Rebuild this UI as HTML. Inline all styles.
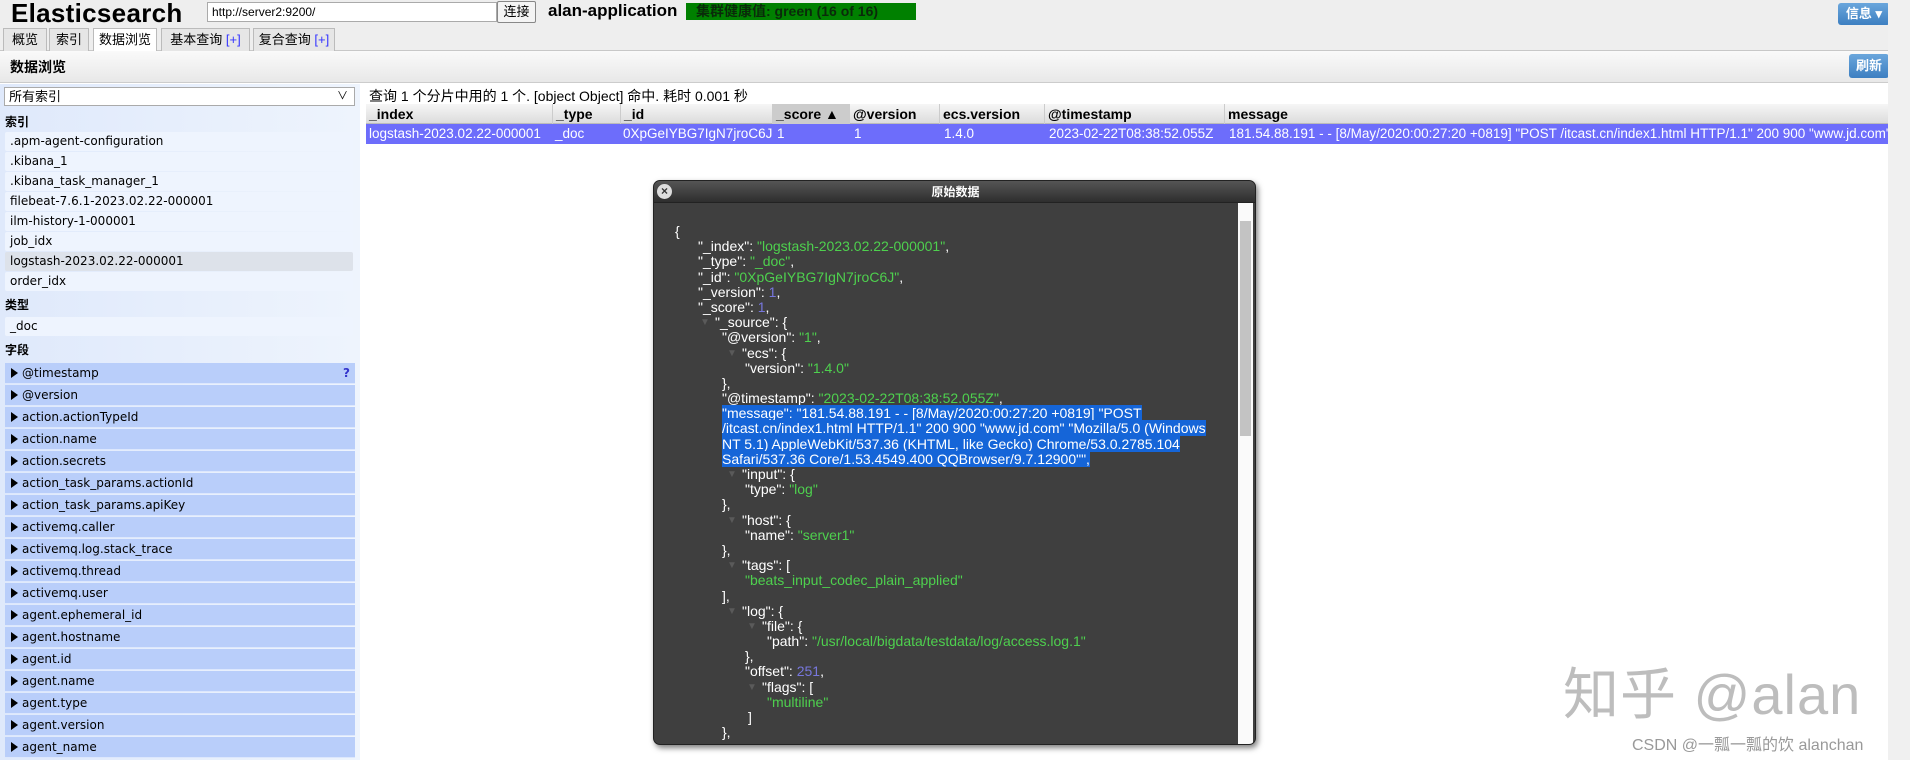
<!DOCTYPE html>
<html><head><meta charset="utf-8">
<style>
*{box-sizing:border-box;margin:0;padding:0}
body{width:1910px;height:760px;overflow:hidden;background:#fff;font-family:"Liberation Sans","Noto Sans CJK SC",sans-serif;font-size:13px;color:#000;position:relative}
.abs{position:absolute}
#top{left:0;top:0;width:1910px;height:51px;background:#eee;border-bottom:1px solid #c8c8c8}
.title{left:11px;top:-2px;font-size:26px;font-weight:bold;letter-spacing:0.3px}
.inp{left:207px;top:2px;width:290px;height:20px;border:1px solid #aaa;background:#fff;font-size:12px;padding:2px 4px}
.btn{left:497px;top:1px;width:39px;height:22px;border:1px solid #888;background:#f4f4f4;border-radius:2px;font-size:13px;text-align:center;line-height:20px}
.cname{left:548px;top:1px;font-size:17px;font-weight:bold}
.health{left:686px;top:3px;width:230px;height:17px;background:#008000;color:#0a2a0a;font-size:14px;font-weight:bold;padding-left:10px;line-height:17px}
.info{left:1838px;top:3px;width:52px;height:22px;background:linear-gradient(#6aa6dc,#3d7fc1);border-radius:3px;color:#fff;font-size:13px;font-weight:bold;text-align:center;line-height:22px}
.tab{top:28px;height:23px;border:1px solid #bbb;border-bottom:none;background:#e6e6e6;font-size:13px;text-align:center;line-height:22px}
.tab b{font-weight:normal;color:#33f}
#hdr{left:0;top:51px;width:1910px;height:32px;background:linear-gradient(#fafafa,#e8e8e8);border-bottom:1px solid #ccc}
.hdrt{left:10px;top:57px;font-size:14px;font-weight:bold}
.refresh{left:1849px;top:54px;width:40px;height:24px;background:linear-gradient(#6aa6dc,#3d7fc1);border-radius:3px;color:#fff;font-size:13px;font-weight:bold;text-align:center;line-height:24px}
#side{left:0;top:84px;width:360px;height:676px;background:linear-gradient(90deg,#dfe9fb,#eef4fd)}
.sel{left:4px;top:87px;width:351px;height:19px;background:#fff;border:1px solid #aaa;font-size:13px;padding-left:4px;line-height:17px}
.sel span{position:absolute;right:6px;top:0;font-size:11px}
.sh{left:5px;font-size:12px;font-weight:bold}
.it{left:5px;width:348px;height:19px;background:#eef4fe;font-family:"DejaVu Sans",sans-serif;font-size:12px;padding-left:5px;line-height:19px;border-radius:2px}
.fd{left:5px;width:350px;height:21px;background:#b9cefa;font-family:"DejaVu Sans",sans-serif;font-size:12px;padding-left:17px;line-height:21px;border-bottom:1px solid #dce7fd}
.fd:before{content:"";position:absolute;left:6px;top:5px;border-left:7px solid #000;border-top:5px solid transparent;border-bottom:5px solid transparent}
.q{left:369px;top:86px;font-size:14px}
#th{left:366px;top:104px;width:1530px;height:20px;background:linear-gradient(#f6f6f6,#dcdcdc);border-bottom:1px solid #bbb}
.th{top:104px;height:20px;font-weight:bold;font-size:14px;line-height:20px;padding-left:3px;border-left:1px solid #ccc}
#tr{left:366px;top:124px;width:1530px;height:20px;background:#6d6dfb}
.td{top:124px;height:20px;line-height:20px;color:#fff;font-size:13.5px;padding-left:3px;white-space:nowrap}
#vs{left:1888px;top:0;width:22px;height:760px;background:#f0f0f0}
#dlg{left:653px;top:180px;width:603px;height:565px;background:#3f3f3f;border-radius:7px;box-shadow:2px 3px 6px rgba(0,0,0,.5);border:1px solid #222;overflow:hidden}
#dt{left:0;top:0;width:603px;height:22px;background:linear-gradient(#555,#2e2e2e);color:#fff;font-size:12px;font-weight:bold;text-align:center;line-height:22px;border-bottom:1px solid #222}
.x{left:3px;top:3px;width:15px;height:15px;border-radius:50%;background:#ddd;color:#333;font-size:12px;line-height:15px;text-align:center;font-weight:bold}
#sb{left:584px;top:22px;width:15px;height:542px;background:#fafafa}
#sbt{left:586px;top:40px;width:11px;height:215px;background:#c3c3c3}
#js{position:absolute;left:21px;top:43px;font-family:"Liberation Sans",sans-serif;font-size:14px;color:#fff;width:560px}
#js div{position:relative;height:15.2px;line-height:15.2px;white-space:nowrap}
#js .s{color:#4ed04e}#js .n{color:#7777dd}
#js i{font-style:normal;color:#5a5a5a;position:absolute;font-size:10px;margin-left:-15px}
#js .h span{background:#1565d8}
.wm{left:1563px;top:650px;font-size:56px;color:#bdbdbd;letter-spacing:1px}
.csdn{left:1632px;top:731px;font-size:16px;color:#999}
</style></head><body>
<div id="top" class="abs"></div>
<div class="abs title">Elasticsearch</div>
<div class="abs inp">http://server2:9200/</div>
<div class="abs btn">连接</div>
<div class="abs cname">alan-application</div>
<div class="abs health">集群健康值: green (16 of 16)</div>
<div class="abs info">信息 ▾</div>
<div class="abs tab" style="left:3px;width:44px">概览</div>
<div class="abs tab" style="left:49px;width:40px">索引</div>
<div class="abs tab" style="left:93px;width:64px;background:#fff;height:24px">数据浏览</div>
<div class="abs tab" style="left:161px;width:89px">基本查询 <b>[+]</b></div>
<div class="abs tab" style="left:253px;width:82px">复合查询 <b>[+]</b></div>
<div id="hdr" class="abs"></div>
<div class="abs hdrt">数据浏览</div>
<div class="abs refresh">刷新</div>

<div id="side" class="abs"></div>
<div class="abs sel">所有索引<span>&#8744;</span></div>
<div class="abs sh" style="top:113px">索引</div>
<div class="abs it" style="top:132px">.apm-agent-configuration</div>
<div class="abs it" style="top:152px">.kibana_1</div>
<div class="abs it" style="top:172px">.kibana_task_manager_1</div>
<div class="abs it" style="top:192px">filebeat-7.6.1-2023.02.22-000001</div>
<div class="abs it" style="top:212px">ilm-history-1-000001</div>
<div class="abs it" style="top:232px">job_idx</div>
<div class="abs it" style="top:252px;background:#dde2ea">logstash-2023.02.22-000001</div>
<div class="abs it" style="top:272px">order_idx</div>
<div class="abs sh" style="top:296px">类型</div>
<div class="abs it" style="top:317px">_doc</div>
<div class="abs sh" style="top:341px">字段</div>
<div class="abs fd" style="top:363px">@timestamp<span style="position:absolute;right:5px;color:#33c;font-weight:bold">?</span></div>
<div class="abs fd" style="top:385px">@version</div>
<div class="abs fd" style="top:407px">action.actionTypeId</div>
<div class="abs fd" style="top:429px">action.name</div>
<div class="abs fd" style="top:451px">action.secrets</div>
<div class="abs fd" style="top:473px">action_task_params.actionId</div>
<div class="abs fd" style="top:495px">action_task_params.apiKey</div>
<div class="abs fd" style="top:517px">activemq.caller</div>
<div class="abs fd" style="top:539px">activemq.log.stack_trace</div>
<div class="abs fd" style="top:561px">activemq.thread</div>
<div class="abs fd" style="top:583px">activemq.user</div>
<div class="abs fd" style="top:605px">agent.ephemeral_id</div>
<div class="abs fd" style="top:627px">agent.hostname</div>
<div class="abs fd" style="top:649px">agent.id</div>
<div class="abs fd" style="top:671px">agent.name</div>
<div class="abs fd" style="top:693px">agent.type</div>
<div class="abs fd" style="top:715px">agent.version</div>
<div class="abs fd" style="top:737px">agent_name</div>

<div class="abs q">查询 1 个分片中用的 1 个. [object Object] 命中. 耗时 0.001 秒</div>
<div id="th" class="abs"></div>
<div class="abs th" style="left:366px;border-left:none">_index</div>
<div class="abs th" style="left:552px">_type</div>
<div class="abs th" style="left:620px">_id</div>
<div class="abs th" style="left:772px;width:77px;background:#ccc">_score &#9650;</div>
<div class="abs th" style="left:849px">@version</div>
<div class="abs th" style="left:939px">ecs.version</div>
<div class="abs th" style="left:1044px">@timestamp</div>
<div class="abs th" style="left:1224px">message</div>
<div id="tr" class="abs"></div>
<div class="abs td" style="left:366px">logstash-2023.02.22-000001</div>
<div class="abs td" style="left:552px">_doc</div>
<div class="abs td" style="left:620px">0XpGeIYBG7IgN7jroC6J</div>
<div class="abs td" style="left:774px">1</div>
<div class="abs td" style="left:851px">1</div>
<div class="abs td" style="left:941px">1.4.0</div>
<div class="abs td" style="left:1046px">2023-02-22T08:38:52.055Z</div>
<div class="abs td" style="left:1226px;width:662px;overflow:hidden">181.54.88.191 - - [8/May/2020:00:27:20 +0819] "POST /itcast.cn/index1.html HTTP/1.1" 200 900 "www.jd.com" "Mozilla/5.0</div>
<div id="vs" class="abs"></div>

<div class="abs wm">知乎 @alan</div>
<div class="abs csdn">CSDN @一瓢一瓢的饮 alanchan</div>

<div id="dlg" class="abs">
<div id="dt" class="abs">原始数据</div>
<div class="abs x">×</div>
<div id="sb" class="abs"></div><div id="sbt" class="abs"></div>
<div id="js">
<div>{</div>
<div style="padding-left:23px">"_index": <span class="s">"logstash-2023.02.22-000001"</span>,</div>
<div style="padding-left:23px">"_type": <span class="s">"_doc"</span>,</div>
<div style="padding-left:23px">"_id": <span class="s">"0XpGeIYBG7IgN7jroC6J"</span>,</div>
<div style="padding-left:23px">"_version": <span class="n">1</span>,</div>
<div style="padding-left:23px">"_score": <span class="n">1</span>,</div>
<div style="padding-left:40px"><i>▼</i>"_source": {</div>
<div style="padding-left:47px">"@version": <span class="s">"1"</span>,</div>
<div style="padding-left:67px"><i>▼</i>"ecs": {</div>
<div style="padding-left:70px">"version": <span class="s">"1.4.0"</span></div>
<div style="padding-left:47px">},</div>
<div style="padding-left:47px">"@timestamp": <span class="s">"2023-02-22T08:38:52.055Z"</span>,</div>
<div class="h" style="padding-left:47px"><span>"message": "181.54.88.191 - - [8/May/2020:00:27:20 +0819] "POST </span></div>
<div class="h" style="padding-left:47px"><span>/itcast.cn/index1.html HTTP/1.1" 200 900 "www.jd.com" "Mozilla/5.0 (Windows</span></div>
<div class="h" style="padding-left:47px"><span>NT 5.1) AppleWebKit/537.36 (KHTML, like Gecko) Chrome/53.0.2785.104 </span></div>
<div class="h" style="padding-left:47px"><span>Safari/537.36 Core/1.53.4549.400 QQBrowser/9.7.12900"",</span></div>
<div style="padding-left:67px"><i>▼</i>"input": {</div>
<div style="padding-left:70px">"type": <span class="s">"log"</span></div>
<div style="padding-left:47px">},</div>
<div style="padding-left:67px"><i>▼</i>"host": {</div>
<div style="padding-left:70px">"name": <span class="s">"server1"</span></div>
<div style="padding-left:47px">},</div>
<div style="padding-left:67px"><i>▼</i>"tags": [</div>
<div style="padding-left:70px"><span class="s">"beats_input_codec_plain_applied"</span></div>
<div style="padding-left:47px">],</div>
<div style="padding-left:67px"><i>▼</i>"log": {</div>
<div style="padding-left:87px"><i>▼</i>"file": {</div>
<div style="padding-left:92px">"path": <span class="s">"/usr/local/bigdata/testdata/log/access.log.1"</span></div>
<div style="padding-left:70px">},</div>
<div style="padding-left:70px">"offset": <span class="n">251</span>,</div>
<div style="padding-left:87px"><i>▼</i>"flags": [</div>
<div style="padding-left:92px"><span class="s">"multiline"</span></div>
<div style="padding-left:73px">]</div>
<div style="padding-left:47px">},</div>
</div>
</div>
</body></html>
